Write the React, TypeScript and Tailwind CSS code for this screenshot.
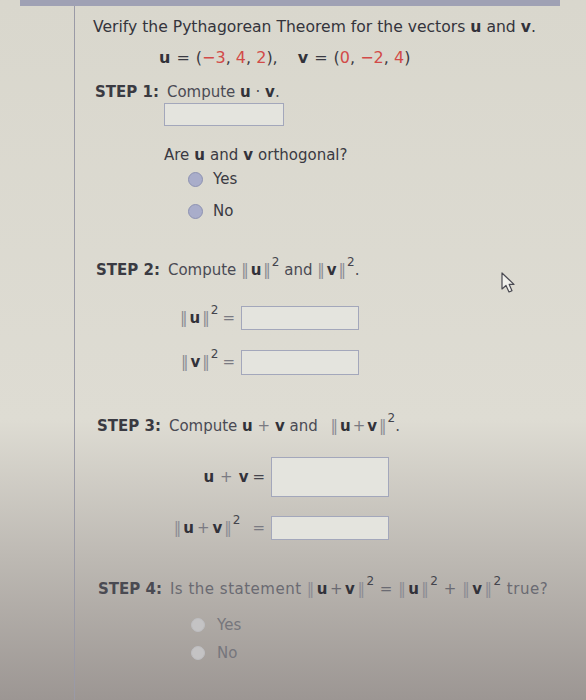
import React from 'react';

const font = { fontFamily: '"DejaVu Sans", Verdana, sans-serif' };

function B({ children }: { children: React.ReactNode }) {
  return <span className="font-bold text-[#32323a]">{children}</span>;
}

function Norm({ children, sup = true }: { children: React.ReactNode; sup?: boolean }) {
  return (
    <span className="inline-flex items-start">
      <span className="text-[#8c8c94] mr-[2px]">‖</span>
      {children}
      <span className="text-[#8c8c94] ml-[2px] mr-[1px]">‖</span>
      {sup && <span className="text-[12px] leading-none -mt-[3px] text-[#44444c]">2</span>}
    </span>
  );
}

function Box({ h = 'h-[24px]' }: { h?: string }) {
  return <div className={`w-[118px] ${h} border border-[#a3a7bb] bg-[#e4e4de]`} />;
}

function Radio({ label, faded }: { label: string; faded?: boolean }) {
  return (
    <div className="flex items-center h-[22px]">
      <span
        className={
          faded
            ? 'w-[14px] h-[14px] rounded-full border border-[#bdbdc0] bg-[#c4c3c4]'
            : 'w-[15px] h-[15px] rounded-full border border-[#8d92b2] bg-[#a9adca]'
        }
      />
      <span className={faded ? 'ml-[12px] text-[#76767c]' : 'ml-[10px] text-[#3a3a42]'}>{label}</span>
    </div>
  );
}

function Step({ n, children }: { n: number; children: React.ReactNode }) {
  return (
    <div className="flex items-center h-[22px] whitespace-nowrap">
      <span className="font-bold text-[#3a3a42] mr-[8px]">STEP {n}:</span>
      <span className="text-[#4a4a54]">{children}</span>
    </div>
  );
}

export default function App() {
  return (
    <div
      className="relative w-[586px] h-[700px] overflow-hidden bg-linear-to-b from-[#d9d7cd] via-[#dedcd3] via-60% to-[#9c9693] text-[15px]"
      style={font}
    >
      <div className="ml-[20px] w-[540px] h-[6px] bg-[#9fa1b4]" />
      <div className="ml-[74px] border-l border-[#9a9aa6] h-[694px] pl-[18px] text-[#3a3a42]">
        <div className="pt-[10px] h-[34px] flex items-center whitespace-nowrap text-[15.6px] text-[#34343c]">
          Verify the Pythagorean Theorem for the vectors <span className="mx-[5px]"><B>u</B></span> and <span className="ml-[5px]"><B>v</B></span>.
        </div>
        <div className="mt-[6px] h-[24px] flex items-center pl-[66px] whitespace-nowrap text-[16px]">
          <B>u</B>
          <span className="mx-[6px]">=</span>
          <span>
            (<span className="text-[#d24a48]">−3</span>, <span className="text-[#d24a48]">4</span>,{' '}
            <span className="text-[#d24a48]">2</span>),
          </span>
          <span className="ml-[20px]">
            <B>v</B>
          </span>
          <span className="mx-[6px]">=</span>
          <span>
            (<span className="text-[#d24a48]">0</span>, <span className="text-[#d24a48]">−2</span>,{' '}
            <span className="text-[#d24a48]">4</span>)
          </span>
        </div>

        <div className="mt-[11px] ml-[2px]">
          <Step n={1}>
            Compute <B>u</B> · <B>v</B>.
          </Step>
        </div>
        <div className="ml-[71px]">
          <div className="w-[120px] h-[23px] border border-[#a3a7bb] bg-[#e4e4de]" />
        </div>

        <div className="mt-[18px] ml-[71px] h-[22px] flex items-center whitespace-nowrap">
          Are <span className="mx-[5px]"><B>u</B></span> and <span className="mx-[5px]"><B>v</B></span> orthogonal?
        </div>
        <div className="ml-[95px] mt-[2px]">
          <Radio label="Yes" />
        </div>
        <div className="ml-[95px] mt-[10px]">
          <Radio label="No" />
        </div>

        <div className="mt-[37px] ml-[3px]">
          <Step n={2}>
            Compute{' '}
            <Norm>
              <B>u</B>
            </Norm>{' '}
            and{' '}
            <Norm>
              <B>v</B>
            </Norm>
            .
          </Step>
        </div>
        <div className="mt-[25px] flex items-center">
          <div className="w-[142px] flex justify-end items-center mr-[6px]">
            <Norm>
              <B>u</B>
            </Norm>
            <span className="ml-[4px] text-[#7a7a82]">=</span>
          </div>
          <Box />
        </div>
        <div className="mt-[20px] flex items-center">
          <div className="w-[142px] flex justify-end items-center mr-[6px]">
            <Norm>
              <B>v</B>
            </Norm>
            <span className="ml-[4px] text-[#7a7a82]">=</span>
          </div>
          <Box h="h-[25px]" />
        </div>

        <div className="mt-[40px] ml-[4px]">
          <Step n={3}>
            Compute <B>u</B> <span className="text-[#7a7a82]">+</span> <B>v</B> and{' '}
            <span className="ml-[8px]">
              <Norm>
                <B>u</B> <span className="text-[#7a7a82] mx-[2px]">+</span> <B>v</B>
              </Norm>
              .
            </span>
          </Step>
        </div>
        <div className="mt-[20px] flex items-center">
          <div className="w-[172px] flex justify-end items-center mr-[6px] whitespace-nowrap">
            <B>u</B>
            <span className="mx-[6px] text-[#7a7a82]">+</span>
            <B>v</B>
            <span className="ml-[4px] text-[#44444c]">=</span>
          </div>
          <Box h="h-[40px]" />
        </div>
        <div className="mt-[19px] flex items-center">
          <div className="w-[172px] flex justify-end items-center mr-[6px] whitespace-nowrap">
            <Norm>
              <B>u</B> <span className="text-[#7a7a82] mx-[3px]">+</span> <B>v</B>
            </Norm>
            <span className="ml-[12px] text-[#7a7a82]">=</span>
          </div>
          <Box />
        </div>

        <div className="mt-[38px] ml-[5px] text-[15px]">
          <div className="flex items-center h-[22px] whitespace-nowrap">
            <span className="font-bold text-[#4a4a52] mr-[8px]">STEP 4:</span>
            <span className="text-[#6a6a72] tracking-[0.5px]">
              Is the statement{' '}
              <Norm>
                <B>u</B> <span className="mx-[2px]">+</span> <B>v</B>
              </Norm>{' '}
              ={' '}
              <Norm>
                <B>u</B>
              </Norm>{' '}
              +{' '}
              <Norm>
                <B>v</B>
              </Norm>{' '}
              true?
            </span>
          </div>
        </div>
        <div className="ml-[98px] mt-[14px]">
          <Radio label="Yes" faded />
        </div>
        <div className="ml-[98px] mt-[6px]">
          <Radio label="No" faded />
        </div>
      </div>

      <svg className="absolute left-[501px] top-[272px]" width="18" height="24" viewBox="0 0 18 24">
        <path
          d="M1 1 L1 17 L5 13.5 L8 20 L11 18.7 L8.2 12.4 L13 12.4 Z"
          fill="#f1f1ec"
          stroke="#4a4a52"
          strokeWidth="1.2"
          strokeLinejoin="round"
        />
      </svg>
    </div>
  );
}
